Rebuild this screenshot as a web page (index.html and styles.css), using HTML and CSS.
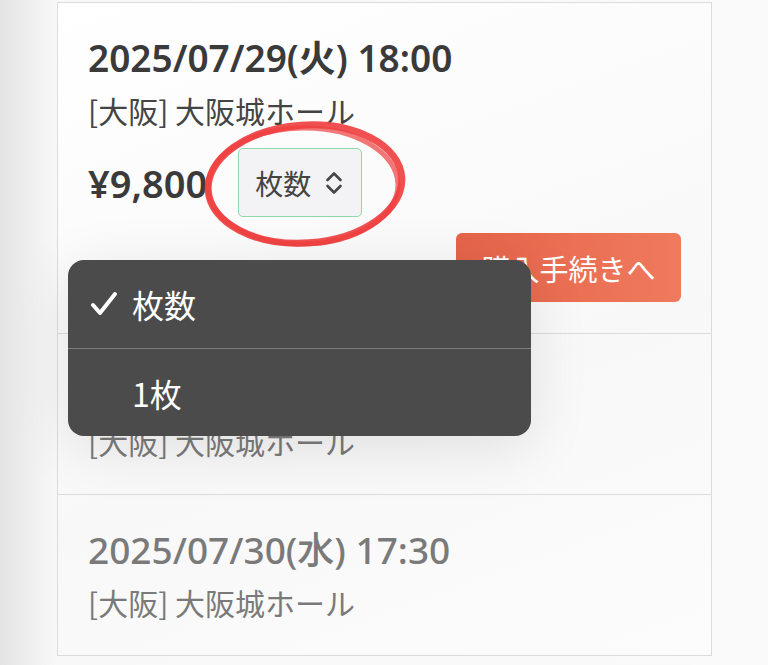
FILE: index.html
```html
<!DOCTYPE html>
<html lang="ja">
<head>
  <meta charset="UTF-8">
  <meta name="viewport" content="width=device-width, initial-scale=1.0">
  <title>公演日程</title>
  <link rel="stylesheet" href="styles.css">
</head>
<body>
  <div class="screen">
    <ul class="events">
      <li class="event">
        <div class="event-date">2025/07/29(火) 18:00</div>
        <div class="event-venue">[大阪] 大阪城ホール</div>
        <div class="event-buy">
          <span class="price">¥9,800</span>
          <div class="qty">
            <span>枚数</span>
            <svg class="qty-icon" width="18" height="26" viewBox="0 0 18 26">
              <path d="M2.5 10 L9 3.5 L15.5 10" />
              <path d="M2.5 16 L9 22.5 L15.5 16" />
            </svg>
          </div>
        </div>
        <div class="event-actions">
          <button class="buy-btn">購入手続きへ</button>
        </div>
      </li>
      <li class="event is-closed">
        <div class="event-date">2025/07/30(水) 12:30</div>
        <div class="event-venue">[大阪] 大阪城ホール</div>
      </li>
      <li class="event is-closed">
        <div class="event-date">2025/07/30(水) 17:30</div>
        <div class="event-venue">[大阪] 大阪城ホール</div>
      </li>
    </ul>

    <!-- hand drawn mark around the quantity picker -->
    <svg class="mark" width="220" height="140" viewBox="0 0 220 140">
      <ellipse cx="106" cy="68" rx="97" ry="59" transform="rotate(-4 106 68)" />
      <ellipse class="mark-2" cx="104" cy="70" rx="95" ry="58" transform="rotate(-1 104 70)" />
    </svg>

    <div class="picker-menu">
      <div class="picker-item">
        <svg class="check" width="28" height="26" viewBox="0 0 28 26">
          <path d="M3 14 L10 22 L25 3" />
        </svg>
        <span>枚数</span>
      </div>
      <div class="picker-item">
        <span>1枚</span>
      </div>
    </div>
  </div>
</body>
</html>
```

FILE: styles.css
```css
* {
  box-sizing: border-box;
}
body {
  margin: 0;
  height: 665px;
  overflow: hidden;
  font-family: "Noto Sans CJK JP", "Noto Sans", sans-serif;
  background: linear-gradient(to right, #e3e3e3 0, #efefef 30px, #f8f8f8 57px, #fafafa 100%);
}
.screen {
  position: relative;
  height: 665px;
}
.events {
  list-style: none;
  margin: 2px 0 0 57px;
  padding: 0;
  width: 655px;
  border-left: 1px solid #dcdcdc;
  border-right: 1px solid #dcdcdc;
  border-bottom: 1px solid #dcdcdc;
  background: linear-gradient(160deg, #ffffff 0, #f8f8f8 60%, #fcfcfc 100%);
}
.event {
  border-top: 1px solid #dcdcdc;
  padding: 31px 30px;
}
.event-date {
  font-family: "Noto Sans", "Noto Sans CJK JP", sans-serif;
  font-size: 37px;
  line-height: 48px;
  font-weight: 600;
  color: #3a3a3a;
}
.event-venue {
  margin-top: 6px;
  font-size: 30px;
  line-height: 44px;
  color: #444;
}
.is-closed .event-date,
.is-closed .event-venue {
  color: #7a7a7a;
}
.is-closed .event-date {
  font-weight: 500;
}
.event-buy {
  display: flex;
  align-items: center;
  gap: 31px;
  margin-top: 16px;
}
.price {
  font-family: "Noto Sans", "Noto Sans CJK JP", sans-serif;
  font-size: 38px;
  font-weight: 600;
  color: #3a3a3a;
}
.qty {
  display: flex;
  align-items: center;
  gap: 14px;
  height: 69px;
  width: 124px;
  padding: 0 16px;
  border: 1.5px solid #8fd8a9;
  border-radius: 5px;
  background: #f3f3f5;
  font-size: 28px;
  color: #444;
}
.qty-icon path {
  fill: none;
  stroke: #454545;
  stroke-width: 2.6;
  stroke-linecap: round;
  stroke-linejoin: round;
}
.event-actions {
  display: flex;
  justify-content: flex-end;
  margin-top: 16px;
}
.buy-btn {
  width: 225px;
  height: 69px;
  border: none;
  border-radius: 6px;
  background: linear-gradient(to right, #e6644a, #ef7a5d);
  color: #fff;
  font-family: inherit;
  font-size: 29px;
}
.mark {
  position: absolute;
  z-index: 1;
  left: 199px;
  top: 114px;
}
.mark ellipse {
  fill: none;
  stroke: #ef3d3d;
  stroke-width: 7;
  opacity: 0.9;
}
.mark .mark-2 {
  stroke-width: 5;
  opacity: 0.7;
}
.picker-menu {
  position: absolute;
  z-index: 2;
  left: 68px;
  top: 258px;
  width: 463px;
  border-radius: 16px;
  background: #4b4b4b;
  box-shadow: 0 12px 60px rgba(0, 0, 0, 0.1);
  overflow: hidden;
}
.picker-item {
  display: flex;
  align-items: center;
  height: 88px;
  padding-left: 64px;
  font-size: 32px;
  color: #fff;
}
.picker-item + .picker-item {
  border-top: 1px solid rgba(255, 255, 255, 0.28);
}
.check {
  margin-left: -42px;
  margin-right: 14px;
}
.check path {
  fill: none;
  stroke: #fff;
  stroke-width: 4;
  stroke-linecap: round;
  stroke-linejoin: round;
}
```
